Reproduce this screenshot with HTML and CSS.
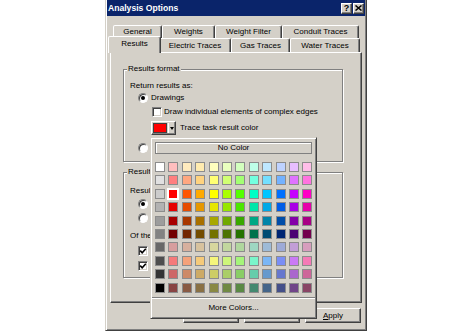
FILE: index.html
```html
<!DOCTYPE html>
<html>
<head>
<meta charset="utf-8">
<link rel="stylesheet" href="styles.css">
</head>
<body>
<div class="dialog">
  <div class="titlebar">
    <span class="title">Analysis Options</span>
    <div class="caps">
      <span class="capbtn help">?</span>
      <span class="capbtn close"><svg width="7" height="6" viewBox="0 0 7 6"><path d="M0.5 0.5 L6.5 5.5 M6.5 0.5 L0.5 5.5" stroke="#000" stroke-width="1.5"/></svg></span>
    </div>
  </div>
  <div class="tabs">
    <div class="tabrow back">
      <div class="tab w-general">General</div>
      <div class="tab w-weights">Weights</div>
      <div class="tab w-wfilter">Weight Filter</div>
      <div class="tab w-conduit">Conduit Traces</div>
    </div>
    <div class="tabrow front">
      <div class="tab sel w-results">Results</div>
      <div class="tab w-electric">Electric Traces</div>
      <div class="tab w-gas">Gas Traces</div>
      <div class="tab w-water">Water Traces</div>
    </div>
  </div>
  <div class="panel">
    <div class="group g1">
      <span class="glabel">Results format</span>
      <div class="row r-return">Return results as:</div>
      <div class="row r-draw"><span class="radio on"></span><span class="lbl">Drawings</span></div>
      <div class="row r-check"><span class="check"></span><span class="lbl2">Draw individual elements of complex edges</span></div>
      <div class="row r-color">
        <span class="colorbtn"><span class="cb-swatch"></span><span class="cb-arrow"><span class="tri"></span></span></span>
        <span class="lbl3">Trace task result color</span>
      </div>
      <div class="row r-sel"><span class="radio"></span><span class="lbl">Selection</span></div>
    </div>
    <div class="group g2">
      <span class="glabel">Results content</span>
      <div class="row r-contain">Results contain:</div>
      <div class="row r-elem"><span class="radio on"></span><span class="lbl">Elements</span></div>
      <div class="row r-feat"><span class="radio"></span><span class="lbl">Features</span></div>
      <div class="row r-of">Of the following types:</div>
      <div class="row r-edges"><span class="check on"><svg width="8" height="8" viewBox="0 0 8 8"><path d="M1.2 3.6 L3.2 5.8 L6.8 1.8" fill="none" stroke="#000" stroke-width="1.6"/></svg></span><span class="lbl">Edges</span></div>
      <div class="row r-junc"><span class="check on"><svg width="8" height="8" viewBox="0 0 8 8"><path d="M1.2 3.6 L3.2 5.8 L6.8 1.8" fill="none" stroke="#000" stroke-width="1.6"/></svg></span><span class="lbl">Junctions</span></div>
    </div>
  </div>
  <div class="btnrow">
    <div class="btn">OK</div>
    <div class="btn">Cancel</div>
    <div class="btn"><span><u>A</u>pply</span></div>
  </div>

  <div class="popup">
    <div class="nocolor">No Color</div>
    <div class="palette">
      <span class="sw" style="background:#ffffff"></span><span class="sw" style="background:#ffbebe"></span><span class="sw" style="background:#ffebbe"></span><span class="sw" style="background:#ffebaf"></span><span class="sw" style="background:#ffffbe"></span><span class="sw" style="background:#e9ffbe"></span><span class="sw" style="background:#d3ffbe"></span><span class="sw" style="background:#beffe8"></span><span class="sw" style="background:#bee8ff"></span><span class="sw" style="background:#bed2ff"></span><span class="sw" style="background:#e8beff"></span><span class="sw" style="background:#ffbee8"></span>
      <span class="sw" style="background:#e1e1e1"></span><span class="sw" style="background:#ff7f7f"></span><span class="sw" style="background:#ffa77f"></span><span class="sw" style="background:#ffd37f"></span><span class="sw" style="background:#ffff73"></span><span class="sw" style="background:#d1ff73"></span><span class="sw" style="background:#a3ff73"></span><span class="sw" style="background:#73ffdf"></span><span class="sw" style="background:#73dfff"></span><span class="sw" style="background:#73b2ff"></span><span class="sw" style="background:#df73ff"></span><span class="sw" style="background:#ff73df"></span>
      <span class="sw" style="background:#cccccc"></span><span class="sw sel" style="background:#ff0000"></span><span class="sw" style="background:#ff5500"></span><span class="sw" style="background:#ffaa00"></span><span class="sw" style="background:#ffff00"></span><span class="sw" style="background:#aaff00"></span><span class="sw" style="background:#55ff00"></span><span class="sw" style="background:#00ffc5"></span><span class="sw" style="background:#00c5ff"></span><span class="sw" style="background:#0070ff"></span><span class="sw" style="background:#c500ff"></span><span class="sw" style="background:#ff00c5"></span>
      <span class="sw" style="background:#b2b2b2"></span><span class="sw" style="background:#e60000"></span><span class="sw" style="background:#e64c00"></span><span class="sw" style="background:#e69800"></span><span class="sw" style="background:#e6e600"></span><span class="sw" style="background:#98e600"></span><span class="sw" style="background:#4ce600"></span><span class="sw" style="background:#00e6a9"></span><span class="sw" style="background:#00a9e6"></span><span class="sw" style="background:#005ce6"></span><span class="sw" style="background:#a900e6"></span><span class="sw" style="background:#e600a9"></span>
      <span class="sw" style="background:#9c9c9c"></span><span class="sw" style="background:#a80000"></span><span class="sw" style="background:#a83800"></span><span class="sw" style="background:#a87000"></span><span class="sw" style="background:#a8a800"></span><span class="sw" style="background:#70a800"></span><span class="sw" style="background:#38a800"></span><span class="sw" style="background:#00a884"></span><span class="sw" style="background:#0084a8"></span><span class="sw" style="background:#004da8"></span><span class="sw" style="background:#8400a8"></span><span class="sw" style="background:#a80084"></span>
      <span class="sw" style="background:#828282"></span><span class="sw" style="background:#730000"></span><span class="sw" style="background:#732600"></span><span class="sw" style="background:#734c00"></span><span class="sw" style="background:#737300"></span><span class="sw" style="background:#4c7300"></span><span class="sw" style="background:#267300"></span><span class="sw" style="background:#00734c"></span><span class="sw" style="background:#004c73"></span><span class="sw" style="background:#002673"></span><span class="sw" style="background:#4c0073"></span><span class="sw" style="background:#73004c"></span>
      <span class="sw" style="background:#686868"></span><span class="sw" style="background:#d79e9e"></span><span class="sw" style="background:#d7b09e"></span><span class="sw" style="background:#d7c29e"></span><span class="sw" style="background:#d7d79e"></span><span class="sw" style="background:#c2d79e"></span><span class="sw" style="background:#b0d79e"></span><span class="sw" style="background:#9ed7c2"></span><span class="sw" style="background:#9ebbd7"></span><span class="sw" style="background:#9eaad7"></span><span class="sw" style="background:#c29ed7"></span><span class="sw" style="background:#d79ebd"></span>
      <span class="sw" style="background:#4e4e4e"></span><span class="sw" style="background:#f57a7a"></span><span class="sw" style="background:#f5a27a"></span><span class="sw" style="background:#f5ca7a"></span><span class="sw" style="background:#f5f57a"></span><span class="sw" style="background:#cdf57a"></span><span class="sw" style="background:#a5f57a"></span><span class="sw" style="background:#7af5ca"></span><span class="sw" style="background:#7ab6f5"></span><span class="sw" style="background:#7a8ef5"></span><span class="sw" style="background:#ca7af5"></span><span class="sw" style="background:#f57ab6"></span>
      <span class="sw" style="background:#343434"></span><span class="sw" style="background:#cd6666"></span><span class="sw" style="background:#cd8966"></span><span class="sw" style="background:#cdaa66"></span><span class="sw" style="background:#cdcd66"></span><span class="sw" style="background:#aacd66"></span><span class="sw" style="background:#89cd66"></span><span class="sw" style="background:#66cdab"></span><span class="sw" style="background:#6699cd"></span><span class="sw" style="background:#6677cd"></span><span class="sw" style="background:#aa66cd"></span><span class="sw" style="background:#cd6699"></span>
      <span class="sw" style="background:#000000"></span><span class="sw" style="background:#894444"></span><span class="sw" style="background:#895a44"></span><span class="sw" style="background:#897044"></span><span class="sw" style="background:#898944"></span><span class="sw" style="background:#708944"></span><span class="sw" style="background:#5a8944"></span><span class="sw" style="background:#448970"></span><span class="sw" style="background:#446589"></span><span class="sw" style="background:#444f89"></span><span class="sw" style="background:#704489"></span><span class="sw" style="background:#894465"></span>
    </div>
    <div class="sep"></div>
    <div class="more">More Colors...</div>
  </div>
</div>
</body>
</html>
```

FILE: styles.css
```css
* { box-sizing: border-box; }
body {
  margin: 0;
  background: #fff;
  font-family: "Liberation Sans", Arial, sans-serif;
  font-size: 8px;
  color: #000;
}
.dialog {
  position: relative;
  margin: -2px 0 0 105px;
  width: 262px;
  height: 333px;
  background: #d4d0c8;
  border: 1px solid;
  border-color: #d4d0c8 #404040 #404040 #d4d0c8;
  box-shadow: inset 1px 1px 0 #fff, inset -1px -1px 0 #808080;
  padding: 1px;
  display: flex;
  flex-direction: column;
}
.titlebar {
  height: 16px;
  flex: none;
  background: #0a246a;
  display: flex;
  align-items: center;
  justify-content: space-between;
  padding: 0 1px 0 1px;
}
.title {
  color: #fff;
  font-weight: bold;
  font-size: 8.6px;
  line-height: 10px;
}
.caps { display: flex; gap: 1px; }
.capbtn {
  width: 11px;
  height: 11px;
  background: #d4d0c8;
  border: 1px solid;
  border-color: #fff #404040 #404040 #fff;
  box-shadow: inset -1px -1px 0 #808080;
  display: flex;
  align-items: center;
  justify-content: center;
  font-weight: bold;
  font-size: 9px;
  line-height: 9px;
}
.tabs { margin-top: 9px; display: flex; flex-direction: column; flex: none; }
.tabrow { display: flex; }
.tabrow.back { margin-left: 6px; height: 13px; }
.tabrow.front { margin-left: 3px; height: 14px; align-items: flex-end; }
.tab {
  height: 100%;
  border: 1px solid;
  border-bottom: none;
  border-color: #fff #404040 transparent #fff;
  box-shadow: inset -1px 0 0 #808080;
  border-radius: 2px 2px 0 0;
  background: #d4d0c8;
  display: flex;
  align-items: center;
  justify-content: center;
  line-height: 10px;
  white-space: nowrap;
}
.tab.sel {
  height: 17px;
  margin: 0 -2px -1px -2px;
  position: relative;
  z-index: 2;
  padding-bottom: 2px;
}
.w-general { width: 49px; }
.w-weights { width: 53px; }
.w-wfilter { width: 67px; }
.w-conduit { width: 77px; }
.w-results { width: 53px; }
.w-electric { width: 72px; }
.w-gas { width: 59px; }
.w-water { width: 70px; }
.panel {
  flex: none;
  height: 251px;
  width: 252px;
  margin-left: 3px;
  border: 1px solid;
  border-color: #fff #404040 #404040 #fff;
  box-shadow: inset -1px -1px 0 #808080;
  padding-left: 12px;
  display: flex;
  flex-direction: column;
}
.group {
  width: 220px;
  border: 1px solid #808080;
  box-shadow: inset 1px 1px 0 #fff, 1px 1px 0 #fff;
  display: flex;
  flex-direction: column;
  padding-left: 6px;
}
.g1 { margin-top: 16px; height: 93px; }
.g2 { margin-top: 10px; height: 106px; }
.glabel {
  align-self: flex-start;
  margin: -6px 0 0 -3px;
  padding: 0 1px;
  height: 10px;
  line-height: 10px;
  background: #d4d0c8;
  white-space: nowrap;
}
.row { display: flex; align-items: center; white-space: nowrap; line-height: 10px; }
.r-return { margin-top: 6px; height: 11px; }
.r-draw { margin-top: 1px; height: 12px; padding-left: 8px; }
.r-check { margin-top: 2px; height: 12px; padding-left: 22px; }
.r-color { margin-top: 3px; height: 14px; padding-left: 21px; }
.r-sel { margin-top: 7px; height: 11px; padding-left: 8px; }
.r-contain { margin-top: 8px; height: 11px; }
.r-elem { margin-top: 2px; height: 11px; padding-left: 8px; }
.r-feat { margin-top: 3px; height: 11px; padding-left: 8px; }
.r-of { margin-top: 7px; height: 11px; }
.r-edges { margin-top: 4px; height: 12px; padding-left: 8px; }
.r-junc { margin-top: 3px; height: 12px; padding-left: 8px; }
.lbl { margin-left: 3px; }
.lbl2 { margin-left: 2px; }
.lbl3 { margin-left: 4px; }
.radio {
  position: relative;
  width: 10px;
  height: 10px;
  flex: none;
  border-radius: 50%;
  background: #fff;
  border: 1px solid;
  border-color: #808080 #fff #fff #808080;
  box-shadow: inset 1px 1px 0 #404040;
}
.radio.on::after {
  content: "";
  position: absolute;
  left: 2px;
  top: 2px;
  width: 4px;
  height: 4px;
  border-radius: 50%;
  background: #000;
}
.check {
  width: 10px;
  height: 10px;
  flex: none;
  background: #fff;
  border: 1px solid;
  border-color: #808080 #fff #fff #808080;
  box-shadow: inset 1px 1px 0 #404040, inset -1px -1px 0 #d4d0c8;
  display: flex;
  align-items: center;
  justify-content: center;
}
.colorbtn {
  display: flex;
  width: 25px;
  height: 14px;
  flex: none;
  border: 1px solid;
  border-color: #fff #404040 #404040 #fff;
  box-shadow: inset -1px -1px 0 #808080;
  padding: 1px 1px 1px 1px;
}
.cb-swatch {
  width: 14px;
  height: 100%;
  background: #ff0000;
  border: 1px solid #404040;
}
.cb-arrow {
  flex: 1;
  margin-left: 1px;
  border-left: 1px solid #fff;
  display: flex;
  align-items: center;
  justify-content: center;
}
.tri {
  width: 0;
  height: 0;
  border-top: 3px solid #000;
  border-left: 2.5px solid transparent;
  border-right: 2.5px solid transparent;
}
.btnrow {
  flex: none;
  display: flex;
  justify-content: flex-end;
  gap: 5px;
  margin-top: 5px;
  padding-right: 4px;
}
.btn {
  width: 56px;
  height: 15px;
  border: 1px solid;
  border-color: #fff #404040 #404040 #fff;
  box-shadow: inset -1px -1px 0 #808080;
  display: flex;
  align-items: center;
  justify-content: center;
  line-height: 10px;
}
.popup {
  position: absolute;
  left: 44px;
  top: 138px;
  width: 167px;
  height: 182px;
  background: #d4d0c8;
  border: 1px solid;
  border-color: #d4d0c8 #404040 #404040 #d4d0c8;
  box-shadow: inset 1px 1px 0 #fff, inset -1px -1px 0 #808080;
  padding: 4px 4px 0 4px;
  display: flex;
  flex-direction: column;
  z-index: 5;
}
.nocolor {
  height: 12px;
  flex: none;
  border: 1px solid #808080;
  box-shadow: inset 1px 1px 0 #fff;
  display: flex;
  align-items: center;
  justify-content: center;
  line-height: 10px;
}
.palette {
  margin-top: 8px;
  display: grid;
  grid-template-columns: repeat(12, 10px);
  grid-auto-rows: 10px;
  column-gap: 3.4px;
  row-gap: 3.4px;
}
.sw { border: 1px solid #8c8c8c; }
.sw.sel { border-color: #fff; box-shadow: 0 0 0 1px #fff; }
.sep {
  margin: 4px -3px 0 -3px;
  height: 2px;
  flex: none;
  border-top: 1px solid #808080;
  border-bottom: 1px solid #fff;
}
.more {
  margin-top: 1px;
  height: 16px;
  flex: none;
  display: flex;
  align-items: center;
  justify-content: center;
  line-height: 10px;
}
```
